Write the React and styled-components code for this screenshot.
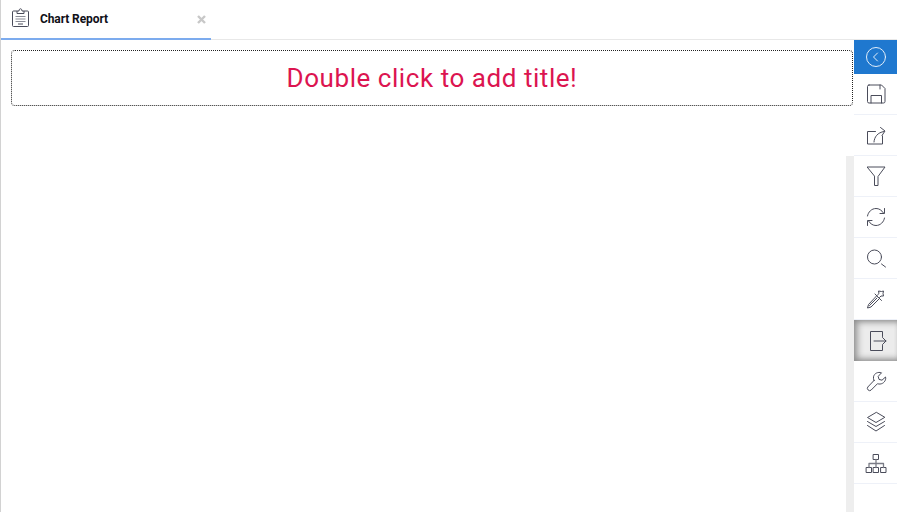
import React from "react";
import styled, { createGlobalStyle } from "styled-components";

const GlobalStyle = createGlobalStyle`
  html, body {
    margin: 0;
    height: 100%;
    background: #fff;
    overflow: hidden;
  }
  #root {
    height: 100%;
  }
`;

const Page = styled.div`
  height: 512px;
  display: flex;
  flex-direction: column;
  border-left: 1px solid #d2d2d2;
  box-sizing: border-box;
  font-family: Roboto, "Liberation Sans", sans-serif;
`;

const TabBar = styled.div`
  height: 40px;
  flex: none;
  display: flex;
  box-sizing: border-box;
  border-bottom: 1px solid #e8e8e8;
`;

const Tab = styled.div`
  width: 210px;
  height: 40px;
  box-sizing: border-box;
  border-bottom: 2px solid #7cabee;
  display: flex;
  align-items: center;
  padding: 0 5px 3px 11px;
`;

const TabLabel = styled.span`
  flex: 1;
  margin-left: 11px;
  margin-top: 2px;
  font-size: 12px;
  font-weight: 700;
  letter-spacing: -0.1px;
  color: #101018;
`;

const TabClose = styled.span`
  display: flex;
  margin-top: 4px;
`;

const Body = styled.div`
  flex: 1;
  min-height: 0;
  display: flex;
  position: relative;
`;

const Main = styled.main`
  flex: 1;
  min-width: 0;
  padding: 10px 1px 0 10px;
`;

const TitleBox = styled.div`
  height: 56px;
  box-sizing: border-box;
  border: 1px dotted #222;
  border-radius: 4px;
  display: flex;
  align-items: center;
  justify-content: center;
  padding-bottom: 1px;
  font-size: 26px;
  letter-spacing: 0.55px;
  color: #dc1450;
`;

const ScrollTrack = styled.div`
  position: absolute;
  top: 116px;
  bottom: 0;
  right: 43px;
  width: 8px;
  background: #eeeeee;
`;

const Sidebar = styled.aside`
  width: 43px;
  flex: none;
  display: flex;
  flex-direction: column;
`;

const ToolButton = styled.div`
  height: ${(p) => (p.$primary ? 34 : 41)}px;
  flex: none;
  box-sizing: border-box;
  display: flex;
  align-items: center;
  justify-content: center;
  border-bottom: ${(p) => (p.$primary || p.$active ? "none" : "1px solid #eef1f8")};
  background: ${(p) => (p.$primary ? "#1f78cf" : p.$active ? "#ececec" : "transparent")};
  box-shadow: ${(p) =>
    p.$active
      ? "inset 0 6px 6px -4px #8e8e8e, inset 0 -6px 6px -4px #8e8e8e, inset 7px 0 7px -4px #8e8e8e"
      : "none"};
`;

const Icon = ({ children, color = "#4a4c5a" }) => (
  <svg width="22" height="22" viewBox="0 0 22 22" fill="none" stroke={color} strokeWidth="1" strokeLinecap="round" strokeLinejoin="round">
    {children}
  </svg>
);

const tools = [
  {
    key: "back",
    primary: true,
    icon: (
      <Icon color="#e4effa">
        <circle cx="11" cy="11" r="9.5" />
        <path d="M12.5 7 8.500 11l4 4" />
      </Icon>
    ),
  },
  {
    key: "save",
    icon: (
      <Icon>
        <path d="M4 2h12.500L20 5.500V18.500A1.500 1.500 0 0 1 18.500 20H4a1.500 1.500 0 0 1-1.500-1.500v-15A1.500 1.500 0 0 1 4 2Z" />
        <path d="M6 20v-7.500h10.500V20M15 2v4" />
      </Icon>
    ),
  },
  {
    key: "share",
    icon: (
      <Icon>
        <path d="M10.500 7.500h-8v12.500h15v-8" />
        <path d="M9 18c.3-5 3.500-9.500 10-10.500M15.500 3.500l4.500 3.500-3 4.500" />
      </Icon>
    ),
  },
  {
    key: "filter",
    icon: (
      <Icon>
        <path d="M2.500 2h17.500l-7 9.500v9H9.500v-9Z" />
      </Icon>
    ),
  },
  {
    key: "refresh",
    icon: (
      <Icon>
        <path d="M2.500 10c.6-4 4.200-7.500 8.500-7.500 3 0 5.500 1.500 7.500 4.500M19.500 2.500V7.500H15" />
        <path d="M19.500 12c-.6 4-4.200 7.500-8.500 7.500-3 0-5.500-1.500-7.500-4.500M2.500 19.500v-5H7" />
      </Icon>
    ),
  },
  {
    key: "search",
    icon: (
      <Icon>
        <circle cx="9.500" cy="10" r="7" />
        <path d="m16.500 17 4 3" />
      </Icon>
    ),
  },
  {
    key: "dropper",
    icon: (
      <Icon>
        <path d="M11.500 8 3.500 16.500 2.500 20l3.500-1 8-8" />
        <path d="M4.500 17.500 12 10" />
        <path d="m10 6 6.500 6.500M12.500 7l1.500-1.500-.5-2.500 3 .5 2-.5-.5 2.500.5 2.500-2.500 0L14.500 9.500" />
      </Icon>
    ),
  },
  {
    key: "export",
    active: true,
    icon: (
      <Icon>
        <path d="M17.500 6.500V1.500H5.500v19h12v-5" />
        <path d="M9 11h12M17.500 7.500 21 11l-3.500 3.500" />
      </Icon>
    ),
  },
  {
    key: "wrench",
    icon: (
      <Icon>
        <path d="M9 10.500 2.800 17a2.300 2.300 0 0 0 3.200 3.200l6.500-6.500c3.500 1.200 7-.8 8-4 .3-1 .3-2 0-2.700l-3.500 3.200-3-.8-.8-3L16.500 2.800c-3.500-1.200-7.200.5-8 4-.2 1.200 0 2.500.5 3.700Z" />
      </Icon>
    ),
  },
  {
    key: "layers",
    icon: (
      <Icon>
        <path d="M11 1.500 2.500 6.500 11 11.500l8.500-5Z" />
        <path d="m2.500 10.500 8.500 5 8.500-5" />
        <path d="m2.500 14.500 8.500 5.500 8.500-5.500" />
      </Icon>
    ),
  },
  {
    key: "tree",
    icon: (
      <Icon>
        <rect x="8.500" y="2.500" width="5" height="5" />
        <rect x="1.500" y="15.500" width="5" height="5" />
        <rect x="8.500" y="15.500" width="5" height="5" />
        <rect x="16" y="15.500" width="5" height="5" />
        <path d="M11 7.500v8M4 15.500v-4h14.500v4" stroke="#7a7c86" strokeWidth="1.300" />
      </Icon>
    ),
  },
];

export default function App() {
  return (
    <Page>
      <GlobalStyle />
      <TabBar>
        <Tab>
          <svg width="17" height="19" viewBox="0 0 17 19" fill="none" stroke="#4a4c5a" strokeWidth="1">
            <path d="M5 3H1.500a1 1 0 0 0-1 1v13.500a1 1 0 0 0 1 1h14a1 1 0 0 0 1-1V4a1 1 0 0 0-1-1H12" />
            <path d="M5 5.500V3h2c0-3 3-3 3 0h2v2.500Z" />
            <path d="M3.500 8.500h10M3.500 11h10M3.500 13.500h10" stroke="#8a8c96" />
            <path d="M6 16h5" />
          </svg>
          <TabLabel>Chart Report</TabLabel>
          <TabClose>
            <svg width="9" height="9" viewBox="0 0 9 9" stroke="#c8c8c8" strokeWidth="2.400">
              <path d="m1 1 7 7M8 1 1 8" />
            </svg>
          </TabClose>
        </Tab>
      </TabBar>
      <Body>
        <Main>
          <TitleBox>Double click to add title!</TitleBox>
        </Main>
        <ScrollTrack />
        <Sidebar>
          {tools.map((t) => (
            <ToolButton key={t.key} $primary={t.primary} $active={t.active}>
              {t.icon}
            </ToolButton>
          ))}
        </Sidebar>
      </Body>
    </Page>
  );
}
